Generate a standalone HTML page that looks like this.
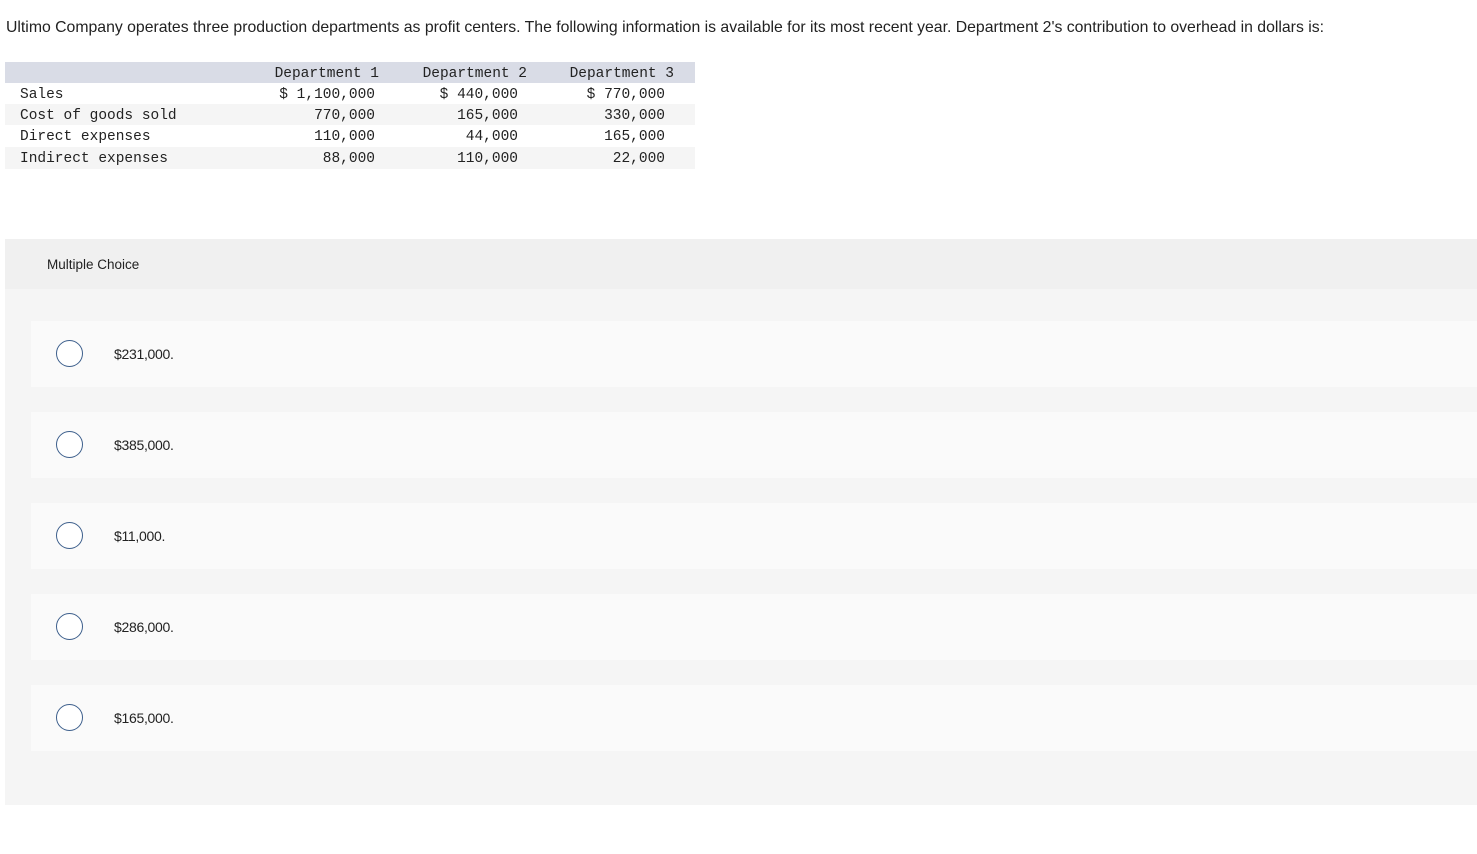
<!DOCTYPE html>
<html><head><style>
body{margin:0;background:#fff;font-family:"Liberation Sans",Arial,sans-serif;color:#222;width:1477px;height:854px;position:relative;overflow:hidden}
.q{position:absolute;left:6px;top:19px;font-size:15.8px;white-space:nowrap}
.tbl{position:absolute;left:5px;top:62px;width:690px;font-family:"Liberation Mono",monospace;font-size:14.5px;color:#222}
.r{position:relative;height:21px;line-height:24px}
.r span{position:absolute;white-space:pre}
.h{background:#d9dce6}
.s{background:#f5f5f5}
.mc{position:absolute;left:5px;top:239px;width:1472px;height:566px;background:#f5f5f5}
.mch{height:50px;background:#f0f0f0;font-size:13.5px;line-height:52px;padding-left:42px}
.opt{position:absolute;left:26px;width:1446px;height:66px;background:#fafafa}
.opt .c{position:absolute;left:25px;top:19px;width:25px;height:25px;border:1.5px solid #3d5f8c;border-radius:50%;background:#fff}
.opt .t{position:absolute;left:83px;top:0;line-height:66px;font-size:14px;letter-spacing:-0.3px}
</style></head><body>
<div class="q">Ultimo Company operates three production departments as profit centers. The following information is available for its most recent year. Department 2's contribution to overhead in dollars is:</div>
<div class="tbl">
<div class="r h"><span style="right:316px">Department 1</span><span style="right:168px">Department 2</span><span style="right:21px">Department 3</span></div>
<div class="r"><span style="left:15px">Sales</span><span style="right:320px">$ 1,100,000</span><span style="right:177px">$ 440,000</span><span style="right:30px">$ 770,000</span></div>
<div class="r s"><span style="left:15px">Cost of goods sold</span><span style="right:320px">770,000</span><span style="right:177px">165,000</span><span style="right:30px">330,000</span></div>
<div class="r"><span style="left:15px">Direct expenses</span><span style="right:320px">110,000</span><span style="right:177px">44,000</span><span style="right:30px">165,000</span></div>
<div class="r s" style="height:22px;margin-top:1px"><span style="left:15px">Indirect expenses</span><span style="right:320px">88,000</span><span style="right:177px">110,000</span><span style="right:30px">22,000</span></div>
</div>
<div class="mc">
<div class="mch">Multiple Choice</div>
<div class="opt" style="top:82px"><div class="c"></div><div class="t">$231,000.</div></div>
<div class="opt" style="top:173px"><div class="c"></div><div class="t">$385,000.</div></div>
<div class="opt" style="top:264px"><div class="c"></div><div class="t">$11,000.</div></div>
<div class="opt" style="top:355px"><div class="c"></div><div class="t">$286,000.</div></div>
<div class="opt" style="top:446px"><div class="c"></div><div class="t">$165,000.</div></div>
</div>
</body></html>
